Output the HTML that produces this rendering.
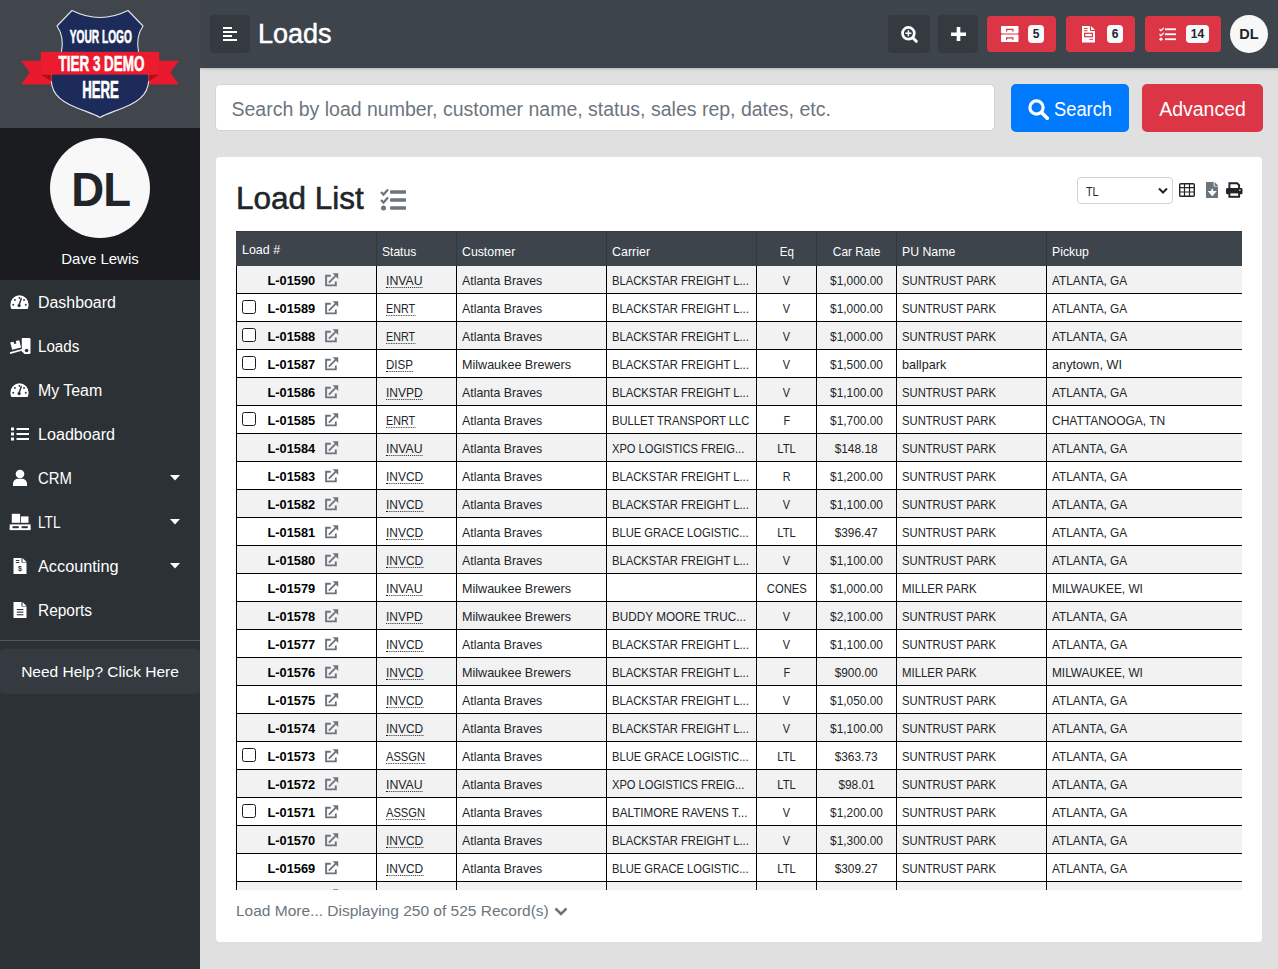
<!DOCTYPE html>
<html lang="en">
<head>
<meta charset="utf-8">
<title>Loads</title>
<style>
*{box-sizing:border-box;margin:0;padding:0}
html,body{width:1278px;height:969px;overflow:hidden}
body{font-family:"Liberation Sans",sans-serif;background:#e0e0e0;color:#212529;position:relative}
svg{display:block}
.abs{position:absolute}

/* ---------- sidebar ---------- */
#side{position:absolute;left:0;top:0;width:200px;height:969px;background:#2c3136;z-index:3}
#logo{position:absolute;left:0;top:0;width:200px;height:128px;background:#41464d}
#prof{position:absolute;left:0;top:128px;width:200px;height:152px;background:#1a1c1f}
#avatar{position:absolute;left:50px;top:10px;width:100px;height:100px;border-radius:50%;background:#f8f8f8;color:#212529;
  font-weight:bold;font-size:49px;line-height:102.500px;text-align:center;letter-spacing:-1px;padding-left:1px}
#avatar span{display:inline-block;transform:scaleX(.93)}
#pname{position:absolute;left:0;top:120.700px;width:200px;text-align:center;color:#fff;font-size:15px;line-height:20px}
.nav{position:absolute;left:0;width:200px;height:44px;color:#fff;font-size:16px;line-height:44px}
.nav .ic{position:absolute;left:10px;top:12px;width:20px;height:20px}
.nav .tx{position:absolute;left:38px;top:1.400px}
.nav .car{position:absolute;left:170px;top:19px;width:10px;height:6px}
#sep{position:absolute;left:0;top:640px;width:200px;height:1px;background:#505861}
#help{position:absolute;left:0;top:649px;width:200px;height:45px;background:#343a40;border-radius:4px;color:#fff;font-size:15.500px;line-height:46px;text-align:center}

/* ---------- top bar ---------- */
#top{position:absolute;left:200px;top:0;width:1098px;height:68px;background:#3d444b;box-shadow:0 1px 2.500px rgba(0,0,0,.2)}
#ham{position:absolute;left:10px;top:15px;width:40px;height:38px;background:#343a40;border-radius:4px}
#title{position:absolute;left:58px;top:11.700px;color:#fff;font-size:27px;line-height:44px;-webkit-text-stroke:.5px #fff}
.tb{position:absolute;top:15px;height:38px;border-radius:4px}
.tb.rd{top:16px;height:36px}
.tb.dk{background:#343a40}
.tb.rd{background:#dc3545}
.bdg{position:absolute;top:9px;height:18px;background:#f8f9fa;color:#212529;border-radius:4px;font-size:12px;font-weight:bold;line-height:19.500px;text-align:center;overflow:hidden}
#tav{position:absolute;left:1030px;top:15px;width:38px;height:38px;border-radius:50%;background:#f8f8f8;color:#212529;font-weight:bold;font-size:14.500px;line-height:39px;text-align:center}

/* ---------- search row ---------- */
#q{position:absolute;left:215px;top:84px;width:780px;height:47px;background:#fff;border:1px solid #ced4da;border-radius:5px;
  color:#6c757d;font-size:19.500px;line-height:49.500px;padding-left:15.500px;white-space:nowrap;overflow:hidden}
#bs{position:absolute;left:1011px;top:84px;width:118px;height:48px;background:#007bff;border-radius:5px;color:#fff;font-size:19.500px;line-height:50px}
#ba{position:absolute;left:1142px;top:84px;width:121px;height:48px;background:#dc3545;border-radius:5px;color:#fff;font-size:19.500px;line-height:50px;text-align:center}

/* ---------- card ---------- */
#card{position:absolute;left:216px;top:157px;width:1046px;height:785px;background:#fff;border-radius:4px}
#h{position:absolute;left:20px;top:21px;font-size:31.500px;line-height:40px;color:#212529;-webkit-text-stroke:.55px #212529}
#sel{position:absolute;left:861px;top:20px;width:96px;height:27px;border:1px solid #ced4da;border-radius:4px;background:#fff;font-size:12.500px;line-height:27px;padding-left:8px;color:#212529}
#sel span{display:inline-block;transform:scaleX(.86);transform-origin:0 50%;position:relative;top:1px}

#tbl{position:absolute;left:20px;top:74px;width:1006px;height:659px;overflow:hidden;font-size:12.8px}
.sx{display:inline-block;transform-origin:0 50%;white-space:nowrap}
.sxc{transform-origin:50% 50%}
.th{position:absolute;top:0;height:35px;background:#3d444b;color:#fff;line-height:40px;overflow:hidden;border-left:1px solid #33393f;border-top:1px solid #353b41;white-space:nowrap}
.tr{position:relative;height:28px;width:1006px;border-bottom:1px solid #000;border-left:1px solid #000}
.tr.odd{background:#f2f2f2}
.tr.even{background:#fff}
.td{position:absolute;top:0;height:27px;line-height:29px;white-space:nowrap;overflow:hidden;border-left:1px solid #000;padding-left:5px}
.c1{left:0;width:139px;border-left:0}
.c2{left:139px;width:80px;padding-left:8.500px}
.c3{left:219px;width:150px}
.c4{left:369px;width:150px}
.c5{left:519px;width:60px;text-align:center;padding-left:0}
.c6{left:579px;width:80px;text-align:center;padding-left:0}
.c7{left:659px;width:150px}
.c8{left:809px;width:197px}
.cb{position:absolute;left:5px;top:6px;width:14px;height:14px;border:1.700px solid #1c1c1c;border-radius:2.500px;background:#fff}
.ln{position:absolute;left:30.500px;top:0;font-weight:bold;color:#000}
.ext{position:absolute;left:88px;top:7px;width:13.500px;height:13.500px}
.st{border-bottom:1px dotted #212529;line-height:12px}
#more{position:absolute;left:20px;top:744px;font-size:15.5px;line-height:20px;color:#6c757d;white-space:nowrap}
</style>
</head>
<body>

<!-- ================= SIDEBAR ================= -->
<div id="side">
  <div id="logo">
    <svg class="abs" style="left:0;top:0" width="200" height="128" viewBox="0 0 200 128">
      <path d="M21 60.800H51.500V84.500H21L29.700 72.600Z" fill="#e8192c"/>
      <path d="M179 60.800H148.500V84.500H179L170.300 72.600Z" fill="#e8192c"/>
      <path d="M72 10.500Q100 24.500 128 10.500L143 26Q135.500 37 138.600 52L148.700 75C149.800 91 143 100 124 107.600C113 112 104 114.500 100 117.600C96 114.500 87 112 76 107.600C57 100 50.200 91 51.300 75L61.400 52Q64.500 37 57 26Z" fill="#1c2b5a" stroke="#e4e7ee" stroke-width="1.100" stroke-linejoin="round"/>
      <path d="M40.700 74.600H51.800V81.500Z" fill="#ad101d"/>
      <path d="M159.300 74.600H148.200V81.500Z" fill="#ad101d"/>
      <rect x="40.700" y="51.800" width="118.600" height="22.800" fill="#ec1b2e"/>
      <g font-family="Liberation Sans, sans-serif" font-weight="bold" fill="#fff" text-anchor="middle" stroke="#fff" stroke-width=".5" style="vector-effect:non-scaling-stroke">
        <text transform="translate(100.800,43) scale(.545,1)" font-size="18.700" style="vector-effect:non-scaling-stroke">YOUR LOGO</text>
        <text transform="translate(101.500,71.100) scale(.612,1)" font-size="22" style="vector-effect:non-scaling-stroke">TIER 3 DEMO</text>
        <text transform="translate(100.500,97.900) scale(.575,1)" font-size="23" style="vector-effect:non-scaling-stroke">HERE</text>
      </g>
    </svg>
  </div>
  <div id="prof">
    <div id="avatar"><span>DL</span></div>
    <div id="pname">Dave Lewis</div>
  </div>

  <div class="nav" style="top:280px"><svg class="ic" viewBox="0 0 20 20" style="left:10.400px;width:19px" preserveAspectRatio="none"><path d="M10 3.2A9.6 9.6 0 0 0 .4 12.8c0 1.5.4 3 1.100 4.200h17a8.400 8.400 0 0 0 1.100-4.200A9.600 9.600 0 0 0 10 3.200z" fill="#fff"/><circle cx="10" cy="6" r="1" fill="#2c3136"/><circle cx="5.200" cy="8" r="1" fill="#2c3136"/><circle cx="14.800" cy="8" r="1" fill="#2c3136"/><circle cx="3.400" cy="12.800" r="1" fill="#2c3136"/><circle cx="16.600" cy="12.800" r="1" fill="#2c3136"/><path d="M9.300 13.500L11.800 6.800" stroke="#2c3136" stroke-width="1.500" stroke-linecap="round"/><circle cx="9.600" cy="13.600" r="1.700" fill="#2c3136"/></svg><span class="tx sx" style="transform:scaleX(0.995)">Dashboard</span></div>

  <div class="nav" style="top:324px"><svg class="ic" viewBox="0 0 20 20" style="overflow:visible"><path d="M11.800 2h7.500a1.200 1.200 0 0 1 1.200 1.200v13.600a1.200 1.200 0 0 1-1.200 1.200h-4.800l-2.700-2.700z" fill="#fff"/><circle cx="16.600" cy="14.500" r="1.800" fill="#2c3136"/><path d="M-.2 16.200L12 12.900l.5 1.700L.3 17.900z" fill="#fff"/><path d="M.2 6.600l3.400-.9.600 2.300 2.200-.6-.600-2.300 3.400-.9 1.900 7.200-8.900 2.400z" fill="#fff"/></svg><span class="tx sx" style="transform:scaleX(0.946)">Loads</span></div>

  <div class="nav" style="top:368px"><svg class="ic" viewBox="0 0 20 20" style="left:10.400px;width:19px" preserveAspectRatio="none"><path d="M10 3.200A9.600 9.600 0 0 0 .4 12.800c0 1.500.4 3 1.100 4.200h17a8.400 8.400 0 0 0 1.100-4.200A9.600 9.600 0 0 0 10 3.200z" fill="#fff"/><circle cx="10" cy="6" r="1" fill="#2c3136"/><circle cx="5.200" cy="8" r="1" fill="#2c3136"/><circle cx="14.800" cy="8" r="1" fill="#2c3136"/><circle cx="3.400" cy="12.800" r="1" fill="#2c3136"/><circle cx="16.600" cy="12.800" r="1" fill="#2c3136"/><path d="M9.300 13.500L11.800 6.800" stroke="#2c3136" stroke-width="1.500" stroke-linecap="round"/><circle cx="9.600" cy="13.600" r="1.700" fill="#2c3136"/></svg><span class="tx sx" style="transform:scaleX(0.993)">My Team</span></div>

  <div class="nav" style="top:412px"><svg class="ic" viewBox="0 0 20 20"><g fill="#fff"><rect x="1" y="3.500" width="3" height="3"/><rect x="1" y="8.500" width="3" height="3"/><rect x="1" y="13.500" width="3" height="3"/><rect x="6.500" y="4" width="12.500" height="2"/><rect x="6.500" y="9" width="12.500" height="2"/><rect x="6.500" y="14" width="12.500" height="2"/></g></svg><span class="tx sx" style="transform:scaleX(1.007)">Loadboard</span></div>

  <div class="nav" style="top:456px"><svg class="ic" viewBox="0 0 20 20"><circle cx="10" cy="6" r="4.300" fill="#fff"/><path d="M3 18v-2.200a5 5 0 0 1 5-5h4a5 5 0 0 1 5 5V18z" fill="#fff"/></svg><span class="tx sx" style="transform:scaleX(0.93)">CRM</span><svg class="car" viewBox="0 0 10 6"><path d="M0 0h10L5 5.500z" fill="#fff"/></svg></div>

  <div class="nav" style="top:500px"><svg class="ic" viewBox="0 0 20 20" style="overflow:visible"><g fill="#fff"><rect x="1.800" y="1.800" width="8.300" height="9"/><rect x="10.900" y="4.400" width="7.600" height="6.400"/><rect x="-.3" y="12.400" width="20.900" height="1.800"/><rect x="-.3" y="16.200" width="20.900" height="1.900"/><rect x="-.3" y="14" width="2.800" height="3"/><rect x="8.800" y="14" width="2.800" height="3"/><rect x="17.800" y="14" width="2.800" height="3"/></g></svg><span class="tx sx" style="transform:scaleX(0.851)">LTL</span><svg class="car" viewBox="0 0 10 6"><path d="M0 0h10L5 5.500z" fill="#fff"/></svg></div>

  <div class="nav" style="top:544px"><svg class="ic" viewBox="0 0 20 20"><path d="M3.500 2h8v4.500h5V18h-13z" fill="#fff"/><path d="M12.500 2l4 4h-4z" fill="#fff"/><rect x="5.800" y="4" width="3.500" height="1" fill="#2c3136"/><rect x="5.800" y="6" width="3.500" height="1" fill="#2c3136"/><text x="10" y="15.300" font-family="Liberation Sans" font-size="7" font-weight="bold" fill="#2c3136" text-anchor="middle">$</text></svg><span class="tx sx" style="transform:scaleX(1.017)">Accounting</span><svg class="car" viewBox="0 0 10 6"><path d="M0 0h10L5 5.500z" fill="#fff"/></svg></div>

  <div class="nav" style="top:588px"><svg class="ic" viewBox="0 0 20 20"><path d="M3.500 2h8v4.500h5V18h-13z" fill="#fff"/><path d="M12.500 2l4 4h-4z" fill="#fff"/><rect x="6.800" y="9" width="6.600" height="1.100" fill="#2c3136"/><rect x="6.800" y="11.600" width="6.600" height="1.100" fill="#2c3136"/><rect x="6.800" y="14.200" width="6.600" height="1.100" fill="#2c3136"/></svg><span class="tx sx" style="transform:scaleX(0.965)">Reports</span></div>

  <div id="sep"></div>
  <div id="help">Need Help? Click Here</div>
</div>

<!-- ================= TOP BAR ================= -->
<div id="top">
  <div id="ham"><svg class="abs" style="left:13px;top:12px" width="14" height="14" viewBox="0 0 14 14"><g fill="#fff"><rect x="0" y="0" width="9" height="2"/><rect x="0" y="4" width="14" height="2"/><rect x="0" y="8" width="9" height="2"/><rect x="0" y="12" width="14" height="2"/></g></svg></div>
  <div id="title">Loads</div>

  <div class="tb dk" style="left:688px;width:42px"><svg class="abs" style="left:12.500px;top:10.500px" width="18" height="18" viewBox="0 0 18 18"><circle cx="7.400" cy="7.300" r="5.900" fill="none" stroke="#fff" stroke-width="2.700"/><path d="M12 12l3.300 3.300" stroke="#fff" stroke-width="3" stroke-linecap="round"/><path d="M4.400 7.300h6M7.400 4.300v6" stroke="#fff" stroke-width="1.500"/></svg></div>
  <div class="tb dk" style="left:738px;width:40px"><svg class="abs" style="left:13px;top:11.800px" width="15" height="14.400" viewBox="0 0 14 14" preserveAspectRatio="none"><path d="M7 0v14M0 7h14" stroke="#fff" stroke-width="3.400"/></svg></div>

  <div class="tb rd" style="left:787px;width:69px"><svg class="abs" style="left:14px;top:10px" width="17.500" height="16" viewBox="0 0 17.5 16"><rect x="0" y="0" width="17.500" height="7.400" rx=".8" fill="#fff"/><rect x="0" y="8.400" width="17.500" height="7.600" rx=".8" fill="#fff"/><path d="M5 2.800h7.500v2.600h-1.300V4H6.300v1.400H5z" fill="#dc3545"/><path d="M5 11.200h7.500v2.600h-1.300v-1.400H6.300v1.400H5z" fill="#dc3545"/></svg><div class="bdg" style="left:41px;width:16px">5</div></div>

  <div class="tb rd" style="left:866px;width:69px"><svg class="abs" style="left:16px;top:10px" width="13" height="16.500" viewBox="0 0 13 16.5"><path d="M0 0h8v5h5v11.500H0z" fill="#fff"/><path d="M9 0l4 4h-4z" fill="#fff"/><rect x="2" y="2" width="3.600" height="1" fill="#dc3545"/><rect x="2" y="4.200" width="3.600" height="1" fill="#dc3545"/><rect x="2.600" y="7.300" width="7.800" height="3.400" fill="none" stroke="#dc3545" stroke-width="1.200"/><rect x="7.400" y="12.800" width="3.600" height="1" fill="#dc3545"/></svg><div class="bdg" style="left:41px;width:16px">6</div></div>

  <div class="tb rd" style="left:945px;width:76px"><svg class="abs" style="left:14px;top:10.500px" width="17" height="14.500" viewBox="0 0 17 16" preserveAspectRatio="none"><g fill="#fff"><rect x="6" y="1.500" width="11" height="2"/><rect x="6" y="7" width="11" height="2"/><rect x="6" y="12.500" width="11" height="2"/><circle cx="2" cy="13.500" r="1.600"/></g><path d="M.5 2.500l1.500 1.500 2.800-3M.5 8l1.500 1.500 2.800-3" fill="none" stroke="#fff" stroke-width="1.400"/></svg><div class="bdg" style="left:41px;width:23px">14</div></div>

  <div id="tav">DL</div>
</div>

<!-- ================= SEARCH ROW ================= -->
<div id="q">Search by load number, customer name, status, sales rep, dates, etc.</div>
<div id="bs"><svg class="abs" style="left:16.500px;top:14.500px" width="21" height="21" viewBox="0 0 21 21"><circle cx="8.500" cy="8.500" r="6.600" fill="none" stroke="#fff" stroke-width="3.200"/><path d="M13.500 13.500l5.800 5.800" stroke="#fff" stroke-width="3.600" stroke-linecap="round"/></svg><span class="abs sx" style="left:43px;top:0;transform:scaleX(.939)">Search</span></div>
<div id="ba">Advanced</div>

<!-- ================= CARD ================= -->
<div id="card">
  <div id="h">Load List</div>
  <svg class="abs" style="left:164px;top:30.500px" width="26" height="24" viewBox="0 0 26 24"><g fill="#6c757d"><rect x="10" y="2.300" width="16.500" height="3.400" rx="1.200"/><rect x="10" y="10.300" width="16.500" height="3.400" rx="1.200"/><rect x="10" y="18.300" width="16.500" height="3.400" rx="1.200"/><circle cx="3.500" cy="20" r="2.500"/></g><path d="M1 4l2.500 2.500L8 1.500M1 12l2.500 2.500L8 9.500" fill="none" stroke="#6c757d" stroke-width="2.300"/></svg>

  <div id="sel"><span>TL</span><svg class="abs" style="left:80px;top:9px" width="10" height="8" viewBox="0 0 10 8"><path d="M1 1.500l4 4 4-4" fill="none" stroke="#212529" stroke-width="2"/></svg></div>
  <svg class="abs" style="left:963px;top:26px" width="16" height="14" viewBox="0 0 16 14"><rect x=".7" y=".7" width="14.600" height="12.600" rx="1" fill="none" stroke="#212529" stroke-width="1.400"/><path d="M.7 4.700h14.600M.7 9h14.600M5.500 .7v12.600M10.500 .7v12.600" stroke="#212529" stroke-width="1.200"/></svg>
  <svg class="abs" style="left:989.500px;top:24.500px" width="12.500" height="16.500" viewBox="0 0 13 17"><path d="M0 0h8v4.500h5V17H0z" fill="#6c757d"/><path d="M9 0l4 4h-4z" fill="#6c757d"/><path d="M6.500 7v4.500M3.500 10l3 3.500 3-3.500z" fill="#fff" stroke="#fff" stroke-width="1.600"/></svg>
  <svg class="abs" style="left:1010px;top:25px" width="16.500" height="16" viewBox="0 0 17 16"><path d="M3.500 6V1h8l2 2v3" fill="none" stroke="#212529" stroke-width="2"/><rect x="0" y="6" width="17" height="6.500" rx="1.500" fill="#212529"/><rect x="3.500" y="10.500" width="10" height="4.500" fill="#fff" stroke="#212529" stroke-width="2"/><circle cx="14.300" cy="8.300" r=".8" fill="#fff"/></svg>

  <div id="tbl">
    <div class="th" style="left:0;width:140px;padding-left:6px;line-height:36.500px;border-left:0"><span class="sx" style="transform:scaleX(0.974)">Load #</span></div>
    <div class="th" style="left:140px;width:80px;padding-left:5px"><span class="sx" style="transform:scaleX(0.942)">Status</span></div>
    <div class="th" style="left:220px;width:150px;padding-left:5px"><span class="sx" style="transform:scaleX(0.961)">Customer</span></div>
    <div class="th" style="left:370px;width:150px;padding-left:5px"><span class="sx" style="transform:scaleX(0.975)">Carrier</span></div>
    <div class="th" style="left:520px;width:60px;text-align:center"><span class="sx sxc" style="transform:scaleX(.9)">Eq</span></div>
    <div class="th" style="left:580px;width:80px;text-align:center"><span class="sx sxc" style="transform:scaleX(0.93)">Car Rate</span></div>
    <div class="th" style="left:660px;width:150px;padding-left:5px"><span class="sx" style="transform:scaleX(0.96)">PU Name</span></div>
    <div class="th" style="left:810px;width:196px;padding-left:5px"><span class="sx" style="transform:scaleX(0.96)">Pickup</span></div>
    <div style="position:absolute;left:0;top:35px;width:1006px">
<div class="tr odd"><div class="td c1"><span class="ln">L-01590</span><svg class="ext" viewBox="0 0 13.5 13.5"><path d="M5.800 2.700H1.100V12.400H10.800V8.500" fill="none" stroke="#6c757d" stroke-width="1.900"/><path d="M3.900 9.700L11.800 1.600" fill="none" stroke="#6c757d" stroke-width="1.800"/><path d="M7.600 .300h5.600v5.600z" fill="#6c757d"/></svg></div><div class="td c2"><span class="sx st" style="transform:scaleX(0.96)">INVAU</span></div><div class="td c3"><span class="sx" style="transform:scaleX(0.963)">Atlanta Braves</span></div><div class="td c4"><span class="sx" style="transform:scaleX(0.877)">BLACKSTAR FREIGHT L...</span></div><div class="td c5"><span class="sx sxc" style="transform:scaleX(0.85)">V</span></div><div class="td c6"><span class="sx sxc" style="transform:scaleX(0.929)">$1,000.00</span></div><div class="td c7"><span class="sx" style="transform:scaleX(0.879)">SUNTRUST PARK</span></div><div class="td c8"><span class="sx" style="transform:scaleX(0.925)">ATLANTA, GA</span></div></div>
<div class="tr even"><div class="td c1"><span class="cb"></span><span class="ln">L-01589</span><svg class="ext" viewBox="0 0 13.5 13.5"><path d="M5.800 2.700H1.100V12.400H10.800V8.500" fill="none" stroke="#6c757d" stroke-width="1.900"/><path d="M3.900 9.700L11.800 1.600" fill="none" stroke="#6c757d" stroke-width="1.800"/><path d="M7.600 .300h5.600v5.600z" fill="#6c757d"/></svg></div><div class="td c2"><span class="sx st" style="transform:scaleX(0.838)">ENRT</span></div><div class="td c3"><span class="sx" style="transform:scaleX(0.963)">Atlanta Braves</span></div><div class="td c4"><span class="sx" style="transform:scaleX(0.877)">BLACKSTAR FREIGHT L...</span></div><div class="td c5"><span class="sx sxc" style="transform:scaleX(0.85)">V</span></div><div class="td c6"><span class="sx sxc" style="transform:scaleX(0.929)">$1,000.00</span></div><div class="td c7"><span class="sx" style="transform:scaleX(0.879)">SUNTRUST PARK</span></div><div class="td c8"><span class="sx" style="transform:scaleX(0.925)">ATLANTA, GA</span></div></div>
<div class="tr odd"><div class="td c1"><span class="cb"></span><span class="ln">L-01588</span><svg class="ext" viewBox="0 0 13.5 13.5"><path d="M5.800 2.700H1.100V12.400H10.800V8.500" fill="none" stroke="#6c757d" stroke-width="1.900"/><path d="M3.900 9.700L11.800 1.600" fill="none" stroke="#6c757d" stroke-width="1.800"/><path d="M7.600 .300h5.600v5.600z" fill="#6c757d"/></svg></div><div class="td c2"><span class="sx st" style="transform:scaleX(0.838)">ENRT</span></div><div class="td c3"><span class="sx" style="transform:scaleX(0.963)">Atlanta Braves</span></div><div class="td c4"><span class="sx" style="transform:scaleX(0.877)">BLACKSTAR FREIGHT L...</span></div><div class="td c5"><span class="sx sxc" style="transform:scaleX(0.85)">V</span></div><div class="td c6"><span class="sx sxc" style="transform:scaleX(0.929)">$1,000.00</span></div><div class="td c7"><span class="sx" style="transform:scaleX(0.879)">SUNTRUST PARK</span></div><div class="td c8"><span class="sx" style="transform:scaleX(0.925)">ATLANTA, GA</span></div></div>
<div class="tr even"><div class="td c1"><span class="cb"></span><span class="ln">L-01587</span><svg class="ext" viewBox="0 0 13.5 13.5"><path d="M5.800 2.700H1.100V12.400H10.800V8.500" fill="none" stroke="#6c757d" stroke-width="1.900"/><path d="M3.900 9.700L11.800 1.600" fill="none" stroke="#6c757d" stroke-width="1.800"/><path d="M7.600 .300h5.600v5.600z" fill="#6c757d"/></svg></div><div class="td c2"><span class="sx st" style="transform:scaleX(0.904)">DISP</span></div><div class="td c3"><span class="sx" style="transform:scaleX(0.982)">Milwaukee Brewers</span></div><div class="td c4"><span class="sx" style="transform:scaleX(0.877)">BLACKSTAR FREIGHT L...</span></div><div class="td c5"><span class="sx sxc" style="transform:scaleX(0.85)">V</span></div><div class="td c6"><span class="sx sxc" style="transform:scaleX(0.929)">$1,500.00</span></div><div class="td c7"><span class="sx" style="transform:scaleX(0.986)">ballpark</span></div><div class="td c8"><span class="sx" style="transform:scaleX(0.994)">anytown, WI</span></div></div>
<div class="tr odd"><div class="td c1"><span class="ln">L-01586</span><svg class="ext" viewBox="0 0 13.5 13.5"><path d="M5.800 2.700H1.100V12.400H10.800V8.500" fill="none" stroke="#6c757d" stroke-width="1.900"/><path d="M3.900 9.700L11.800 1.600" fill="none" stroke="#6c757d" stroke-width="1.800"/><path d="M7.600 .300h5.600v5.600z" fill="#6c757d"/></svg></div><div class="td c2"><span class="sx st" style="transform:scaleX(0.938)">INVPD</span></div><div class="td c3"><span class="sx" style="transform:scaleX(0.963)">Atlanta Braves</span></div><div class="td c4"><span class="sx" style="transform:scaleX(0.877)">BLACKSTAR FREIGHT L...</span></div><div class="td c5"><span class="sx sxc" style="transform:scaleX(0.85)">V</span></div><div class="td c6"><span class="sx sxc" style="transform:scaleX(0.929)">$1,100.00</span></div><div class="td c7"><span class="sx" style="transform:scaleX(0.879)">SUNTRUST PARK</span></div><div class="td c8"><span class="sx" style="transform:scaleX(0.925)">ATLANTA, GA</span></div></div>
<div class="tr even"><div class="td c1"><span class="cb"></span><span class="ln">L-01585</span><svg class="ext" viewBox="0 0 13.5 13.5"><path d="M5.800 2.700H1.100V12.400H10.800V8.500" fill="none" stroke="#6c757d" stroke-width="1.900"/><path d="M3.900 9.700L11.800 1.600" fill="none" stroke="#6c757d" stroke-width="1.800"/><path d="M7.600 .300h5.600v5.600z" fill="#6c757d"/></svg></div><div class="td c2"><span class="sx st" style="transform:scaleX(0.838)">ENRT</span></div><div class="td c3"><span class="sx" style="transform:scaleX(0.963)">Atlanta Braves</span></div><div class="td c4"><span class="sx" style="transform:scaleX(0.875)">BULLET TRANSPORT LLC</span></div><div class="td c5"><span class="sx sxc" style="transform:scaleX(0.85)">F</span></div><div class="td c6"><span class="sx sxc" style="transform:scaleX(0.929)">$1,700.00</span></div><div class="td c7"><span class="sx" style="transform:scaleX(0.879)">SUNTRUST PARK</span></div><div class="td c8"><span class="sx" style="transform:scaleX(0.937)">CHATTANOOGA, TN</span></div></div>
<div class="tr odd"><div class="td c1"><span class="ln">L-01584</span><svg class="ext" viewBox="0 0 13.5 13.5"><path d="M5.800 2.700H1.100V12.400H10.800V8.500" fill="none" stroke="#6c757d" stroke-width="1.900"/><path d="M3.900 9.700L11.800 1.600" fill="none" stroke="#6c757d" stroke-width="1.800"/><path d="M7.600 .300h5.600v5.600z" fill="#6c757d"/></svg></div><div class="td c2"><span class="sx st" style="transform:scaleX(0.96)">INVAU</span></div><div class="td c3"><span class="sx" style="transform:scaleX(0.963)">Atlanta Braves</span></div><div class="td c4"><span class="sx" style="transform:scaleX(0.869)">XPO LOGISTICS FREIG...</span></div><div class="td c5"><span class="sx sxc" style="transform:scaleX(0.88)">LTL</span></div><div class="td c6"><span class="sx sxc" style="transform:scaleX(0.929)">$148.18</span></div><div class="td c7"><span class="sx" style="transform:scaleX(0.879)">SUNTRUST PARK</span></div><div class="td c8"><span class="sx" style="transform:scaleX(0.925)">ATLANTA, GA</span></div></div>
<div class="tr even"><div class="td c1"><span class="ln">L-01583</span><svg class="ext" viewBox="0 0 13.5 13.5"><path d="M5.800 2.700H1.100V12.400H10.800V8.500" fill="none" stroke="#6c757d" stroke-width="1.900"/><path d="M3.900 9.700L11.800 1.600" fill="none" stroke="#6c757d" stroke-width="1.800"/><path d="M7.600 .300h5.600v5.600z" fill="#6c757d"/></svg></div><div class="td c2"><span class="sx st" style="transform:scaleX(0.936)">INVCD</span></div><div class="td c3"><span class="sx" style="transform:scaleX(0.963)">Atlanta Braves</span></div><div class="td c4"><span class="sx" style="transform:scaleX(0.877)">BLACKSTAR FREIGHT L...</span></div><div class="td c5"><span class="sx sxc" style="transform:scaleX(0.85)">R</span></div><div class="td c6"><span class="sx sxc" style="transform:scaleX(0.929)">$1,200.00</span></div><div class="td c7"><span class="sx" style="transform:scaleX(0.879)">SUNTRUST PARK</span></div><div class="td c8"><span class="sx" style="transform:scaleX(0.925)">ATLANTA, GA</span></div></div>
<div class="tr odd"><div class="td c1"><span class="ln">L-01582</span><svg class="ext" viewBox="0 0 13.5 13.5"><path d="M5.800 2.700H1.100V12.400H10.800V8.500" fill="none" stroke="#6c757d" stroke-width="1.900"/><path d="M3.900 9.700L11.800 1.600" fill="none" stroke="#6c757d" stroke-width="1.800"/><path d="M7.600 .300h5.600v5.600z" fill="#6c757d"/></svg></div><div class="td c2"><span class="sx st" style="transform:scaleX(0.936)">INVCD</span></div><div class="td c3"><span class="sx" style="transform:scaleX(0.963)">Atlanta Braves</span></div><div class="td c4"><span class="sx" style="transform:scaleX(0.877)">BLACKSTAR FREIGHT L...</span></div><div class="td c5"><span class="sx sxc" style="transform:scaleX(0.85)">V</span></div><div class="td c6"><span class="sx sxc" style="transform:scaleX(0.929)">$1,100.00</span></div><div class="td c7"><span class="sx" style="transform:scaleX(0.879)">SUNTRUST PARK</span></div><div class="td c8"><span class="sx" style="transform:scaleX(0.925)">ATLANTA, GA</span></div></div>
<div class="tr even"><div class="td c1"><span class="ln">L-01581</span><svg class="ext" viewBox="0 0 13.5 13.5"><path d="M5.800 2.700H1.100V12.400H10.800V8.500" fill="none" stroke="#6c757d" stroke-width="1.900"/><path d="M3.900 9.700L11.800 1.600" fill="none" stroke="#6c757d" stroke-width="1.800"/><path d="M7.600 .300h5.600v5.600z" fill="#6c757d"/></svg></div><div class="td c2"><span class="sx st" style="transform:scaleX(0.936)">INVCD</span></div><div class="td c3"><span class="sx" style="transform:scaleX(0.963)">Atlanta Braves</span></div><div class="td c4"><span class="sx" style="transform:scaleX(0.873)">BLUE GRACE LOGISTIC...</span></div><div class="td c5"><span class="sx sxc" style="transform:scaleX(0.88)">LTL</span></div><div class="td c6"><span class="sx sxc" style="transform:scaleX(0.929)">$396.47</span></div><div class="td c7"><span class="sx" style="transform:scaleX(0.879)">SUNTRUST PARK</span></div><div class="td c8"><span class="sx" style="transform:scaleX(0.925)">ATLANTA, GA</span></div></div>
<div class="tr odd"><div class="td c1"><span class="ln">L-01580</span><svg class="ext" viewBox="0 0 13.5 13.5"><path d="M5.800 2.700H1.100V12.400H10.800V8.500" fill="none" stroke="#6c757d" stroke-width="1.900"/><path d="M3.900 9.700L11.800 1.600" fill="none" stroke="#6c757d" stroke-width="1.800"/><path d="M7.600 .300h5.600v5.600z" fill="#6c757d"/></svg></div><div class="td c2"><span class="sx st" style="transform:scaleX(0.936)">INVCD</span></div><div class="td c3"><span class="sx" style="transform:scaleX(0.963)">Atlanta Braves</span></div><div class="td c4"><span class="sx" style="transform:scaleX(0.877)">BLACKSTAR FREIGHT L...</span></div><div class="td c5"><span class="sx sxc" style="transform:scaleX(0.85)">V</span></div><div class="td c6"><span class="sx sxc" style="transform:scaleX(0.929)">$1,100.00</span></div><div class="td c7"><span class="sx" style="transform:scaleX(0.879)">SUNTRUST PARK</span></div><div class="td c8"><span class="sx" style="transform:scaleX(0.925)">ATLANTA, GA</span></div></div>
<div class="tr even"><div class="td c1"><span class="ln">L-01579</span><svg class="ext" viewBox="0 0 13.5 13.5"><path d="M5.800 2.700H1.100V12.400H10.800V8.500" fill="none" stroke="#6c757d" stroke-width="1.900"/><path d="M3.900 9.700L11.800 1.600" fill="none" stroke="#6c757d" stroke-width="1.800"/><path d="M7.600 .300h5.600v5.600z" fill="#6c757d"/></svg></div><div class="td c2"><span class="sx st" style="transform:scaleX(0.96)">INVAU</span></div><div class="td c3"><span class="sx" style="transform:scaleX(0.982)">Milwaukee Brewers</span></div><div class="td c4"></div><div class="td c5"><span class="sx sxc" style="transform:scaleX(0.876)">CONES</span></div><div class="td c6"><span class="sx sxc" style="transform:scaleX(0.929)">$1,000.00</span></div><div class="td c7"><span class="sx" style="transform:scaleX(0.891)">MILLER PARK</span></div><div class="td c8"><span class="sx" style="transform:scaleX(0.926)">MILWAUKEE, WI</span></div></div>
<div class="tr odd"><div class="td c1"><span class="ln">L-01578</span><svg class="ext" viewBox="0 0 13.5 13.5"><path d="M5.800 2.700H1.100V12.400H10.800V8.500" fill="none" stroke="#6c757d" stroke-width="1.900"/><path d="M3.900 9.700L11.800 1.600" fill="none" stroke="#6c757d" stroke-width="1.800"/><path d="M7.600 .300h5.600v5.600z" fill="#6c757d"/></svg></div><div class="td c2"><span class="sx st" style="transform:scaleX(0.938)">INVPD</span></div><div class="td c3"><span class="sx" style="transform:scaleX(0.982)">Milwaukee Brewers</span></div><div class="td c4"><span class="sx" style="transform:scaleX(0.918)">BUDDY MOORE TRUC...</span></div><div class="td c5"><span class="sx sxc" style="transform:scaleX(0.85)">V</span></div><div class="td c6"><span class="sx sxc" style="transform:scaleX(0.929)">$2,100.00</span></div><div class="td c7"><span class="sx" style="transform:scaleX(0.879)">SUNTRUST PARK</span></div><div class="td c8"><span class="sx" style="transform:scaleX(0.925)">ATLANTA, GA</span></div></div>
<div class="tr even"><div class="td c1"><span class="ln">L-01577</span><svg class="ext" viewBox="0 0 13.5 13.5"><path d="M5.800 2.700H1.100V12.400H10.800V8.500" fill="none" stroke="#6c757d" stroke-width="1.900"/><path d="M3.900 9.700L11.800 1.600" fill="none" stroke="#6c757d" stroke-width="1.800"/><path d="M7.600 .300h5.600v5.600z" fill="#6c757d"/></svg></div><div class="td c2"><span class="sx st" style="transform:scaleX(0.936)">INVCD</span></div><div class="td c3"><span class="sx" style="transform:scaleX(0.963)">Atlanta Braves</span></div><div class="td c4"><span class="sx" style="transform:scaleX(0.877)">BLACKSTAR FREIGHT L...</span></div><div class="td c5"><span class="sx sxc" style="transform:scaleX(0.85)">V</span></div><div class="td c6"><span class="sx sxc" style="transform:scaleX(0.929)">$1,100.00</span></div><div class="td c7"><span class="sx" style="transform:scaleX(0.879)">SUNTRUST PARK</span></div><div class="td c8"><span class="sx" style="transform:scaleX(0.925)">ATLANTA, GA</span></div></div>
<div class="tr odd"><div class="td c1"><span class="ln">L-01576</span><svg class="ext" viewBox="0 0 13.5 13.5"><path d="M5.800 2.700H1.100V12.400H10.800V8.500" fill="none" stroke="#6c757d" stroke-width="1.900"/><path d="M3.900 9.700L11.800 1.600" fill="none" stroke="#6c757d" stroke-width="1.800"/><path d="M7.600 .300h5.600v5.600z" fill="#6c757d"/></svg></div><div class="td c2"><span class="sx st" style="transform:scaleX(0.936)">INVCD</span></div><div class="td c3"><span class="sx" style="transform:scaleX(0.982)">Milwaukee Brewers</span></div><div class="td c4"><span class="sx" style="transform:scaleX(0.877)">BLACKSTAR FREIGHT L...</span></div><div class="td c5"><span class="sx sxc" style="transform:scaleX(0.85)">F</span></div><div class="td c6"><span class="sx sxc" style="transform:scaleX(0.929)">$900.00</span></div><div class="td c7"><span class="sx" style="transform:scaleX(0.891)">MILLER PARK</span></div><div class="td c8"><span class="sx" style="transform:scaleX(0.926)">MILWAUKEE, WI</span></div></div>
<div class="tr even"><div class="td c1"><span class="ln">L-01575</span><svg class="ext" viewBox="0 0 13.5 13.5"><path d="M5.800 2.700H1.100V12.400H10.800V8.500" fill="none" stroke="#6c757d" stroke-width="1.900"/><path d="M3.900 9.700L11.800 1.600" fill="none" stroke="#6c757d" stroke-width="1.800"/><path d="M7.600 .300h5.600v5.600z" fill="#6c757d"/></svg></div><div class="td c2"><span class="sx st" style="transform:scaleX(0.936)">INVCD</span></div><div class="td c3"><span class="sx" style="transform:scaleX(0.963)">Atlanta Braves</span></div><div class="td c4"><span class="sx" style="transform:scaleX(0.877)">BLACKSTAR FREIGHT L...</span></div><div class="td c5"><span class="sx sxc" style="transform:scaleX(0.85)">V</span></div><div class="td c6"><span class="sx sxc" style="transform:scaleX(0.929)">$1,050.00</span></div><div class="td c7"><span class="sx" style="transform:scaleX(0.879)">SUNTRUST PARK</span></div><div class="td c8"><span class="sx" style="transform:scaleX(0.925)">ATLANTA, GA</span></div></div>
<div class="tr odd"><div class="td c1"><span class="ln">L-01574</span><svg class="ext" viewBox="0 0 13.5 13.5"><path d="M5.800 2.700H1.100V12.400H10.800V8.500" fill="none" stroke="#6c757d" stroke-width="1.900"/><path d="M3.900 9.700L11.800 1.600" fill="none" stroke="#6c757d" stroke-width="1.800"/><path d="M7.600 .300h5.600v5.600z" fill="#6c757d"/></svg></div><div class="td c2"><span class="sx st" style="transform:scaleX(0.936)">INVCD</span></div><div class="td c3"><span class="sx" style="transform:scaleX(0.963)">Atlanta Braves</span></div><div class="td c4"><span class="sx" style="transform:scaleX(0.877)">BLACKSTAR FREIGHT L...</span></div><div class="td c5"><span class="sx sxc" style="transform:scaleX(0.85)">V</span></div><div class="td c6"><span class="sx sxc" style="transform:scaleX(0.929)">$1,100.00</span></div><div class="td c7"><span class="sx" style="transform:scaleX(0.879)">SUNTRUST PARK</span></div><div class="td c8"><span class="sx" style="transform:scaleX(0.925)">ATLANTA, GA</span></div></div>
<div class="tr even"><div class="td c1"><span class="cb"></span><span class="ln">L-01573</span><svg class="ext" viewBox="0 0 13.5 13.5"><path d="M5.800 2.700H1.100V12.400H10.800V8.500" fill="none" stroke="#6c757d" stroke-width="1.900"/><path d="M3.900 9.700L11.800 1.600" fill="none" stroke="#6c757d" stroke-width="1.800"/><path d="M7.600 .300h5.600v5.600z" fill="#6c757d"/></svg></div><div class="td c2"><span class="sx st" style="transform:scaleX(0.871)">ASSGN</span></div><div class="td c3"><span class="sx" style="transform:scaleX(0.963)">Atlanta Braves</span></div><div class="td c4"><span class="sx" style="transform:scaleX(0.873)">BLUE GRACE LOGISTIC...</span></div><div class="td c5"><span class="sx sxc" style="transform:scaleX(0.88)">LTL</span></div><div class="td c6"><span class="sx sxc" style="transform:scaleX(0.929)">$363.73</span></div><div class="td c7"><span class="sx" style="transform:scaleX(0.879)">SUNTRUST PARK</span></div><div class="td c8"><span class="sx" style="transform:scaleX(0.925)">ATLANTA, GA</span></div></div>
<div class="tr odd"><div class="td c1"><span class="ln">L-01572</span><svg class="ext" viewBox="0 0 13.5 13.5"><path d="M5.800 2.700H1.100V12.400H10.800V8.500" fill="none" stroke="#6c757d" stroke-width="1.900"/><path d="M3.900 9.700L11.800 1.600" fill="none" stroke="#6c757d" stroke-width="1.800"/><path d="M7.600 .300h5.600v5.600z" fill="#6c757d"/></svg></div><div class="td c2"><span class="sx st" style="transform:scaleX(0.96)">INVAU</span></div><div class="td c3"><span class="sx" style="transform:scaleX(0.963)">Atlanta Braves</span></div><div class="td c4"><span class="sx" style="transform:scaleX(0.869)">XPO LOGISTICS FREIG...</span></div><div class="td c5"><span class="sx sxc" style="transform:scaleX(0.88)">LTL</span></div><div class="td c6"><span class="sx sxc" style="transform:scaleX(0.929)">$98.01</span></div><div class="td c7"><span class="sx" style="transform:scaleX(0.879)">SUNTRUST PARK</span></div><div class="td c8"><span class="sx" style="transform:scaleX(0.925)">ATLANTA, GA</span></div></div>
<div class="tr even"><div class="td c1"><span class="cb"></span><span class="ln">L-01571</span><svg class="ext" viewBox="0 0 13.5 13.5"><path d="M5.800 2.700H1.100V12.400H10.800V8.500" fill="none" stroke="#6c757d" stroke-width="1.900"/><path d="M3.900 9.700L11.800 1.600" fill="none" stroke="#6c757d" stroke-width="1.800"/><path d="M7.600 .300h5.600v5.600z" fill="#6c757d"/></svg></div><div class="td c2"><span class="sx st" style="transform:scaleX(0.871)">ASSGN</span></div><div class="td c3"><span class="sx" style="transform:scaleX(0.963)">Atlanta Braves</span></div><div class="td c4"><span class="sx" style="transform:scaleX(0.911)">BALTIMORE RAVENS T...</span></div><div class="td c5"><span class="sx sxc" style="transform:scaleX(0.85)">V</span></div><div class="td c6"><span class="sx sxc" style="transform:scaleX(0.929)">$1,200.00</span></div><div class="td c7"><span class="sx" style="transform:scaleX(0.879)">SUNTRUST PARK</span></div><div class="td c8"><span class="sx" style="transform:scaleX(0.925)">ATLANTA, GA</span></div></div>
<div class="tr odd"><div class="td c1"><span class="ln">L-01570</span><svg class="ext" viewBox="0 0 13.5 13.5"><path d="M5.800 2.700H1.100V12.400H10.800V8.500" fill="none" stroke="#6c757d" stroke-width="1.900"/><path d="M3.900 9.700L11.800 1.600" fill="none" stroke="#6c757d" stroke-width="1.800"/><path d="M7.600 .300h5.600v5.600z" fill="#6c757d"/></svg></div><div class="td c2"><span class="sx st" style="transform:scaleX(0.936)">INVCD</span></div><div class="td c3"><span class="sx" style="transform:scaleX(0.963)">Atlanta Braves</span></div><div class="td c4"><span class="sx" style="transform:scaleX(0.877)">BLACKSTAR FREIGHT L...</span></div><div class="td c5"><span class="sx sxc" style="transform:scaleX(0.85)">V</span></div><div class="td c6"><span class="sx sxc" style="transform:scaleX(0.929)">$1,300.00</span></div><div class="td c7"><span class="sx" style="transform:scaleX(0.879)">SUNTRUST PARK</span></div><div class="td c8"><span class="sx" style="transform:scaleX(0.925)">ATLANTA, GA</span></div></div>
<div class="tr even"><div class="td c1"><span class="ln">L-01569</span><svg class="ext" viewBox="0 0 13.5 13.5"><path d="M5.800 2.700H1.100V12.400H10.800V8.500" fill="none" stroke="#6c757d" stroke-width="1.900"/><path d="M3.900 9.700L11.800 1.600" fill="none" stroke="#6c757d" stroke-width="1.800"/><path d="M7.600 .300h5.600v5.600z" fill="#6c757d"/></svg></div><div class="td c2"><span class="sx st" style="transform:scaleX(0.936)">INVCD</span></div><div class="td c3"><span class="sx" style="transform:scaleX(0.963)">Atlanta Braves</span></div><div class="td c4"><span class="sx" style="transform:scaleX(0.873)">BLUE GRACE LOGISTIC...</span></div><div class="td c5"><span class="sx sxc" style="transform:scaleX(0.88)">LTL</span></div><div class="td c6"><span class="sx sxc" style="transform:scaleX(0.929)">$309.27</span></div><div class="td c7"><span class="sx" style="transform:scaleX(0.879)">SUNTRUST PARK</span></div><div class="td c8"><span class="sx" style="transform:scaleX(0.925)">ATLANTA, GA</span></div></div>
<div class="tr odd"><div class="td c1"><span class="ln">L-01568</span><svg class="ext" viewBox="0 0 13.5 13.5"><path d="M5.800 2.700H1.100V12.400H10.800V8.500" fill="none" stroke="#6c757d" stroke-width="1.900"/><path d="M3.900 9.700L11.800 1.600" fill="none" stroke="#6c757d" stroke-width="1.800"/><path d="M7.600 .300h5.600v5.600z" fill="#6c757d"/></svg></div><div class="td c2"></div><div class="td c3"></div><div class="td c4"></div><div class="td c5"></div><div class="td c6"></div><div class="td c7"></div><div class="td c8"></div></div>
    </div>
  </div>
  <div id="more">Load More... Displaying 250 of 525 Record(s)<svg style="display:inline-block;vertical-align:-1px;margin-left:5px" width="14" height="10" viewBox="0 0 14 10"><path d="M1.500 1.500L7 7l5.500-5.500" fill="none" stroke="#6c757d" stroke-width="2.600"/></svg></div>
</div>

</body>
</html>
